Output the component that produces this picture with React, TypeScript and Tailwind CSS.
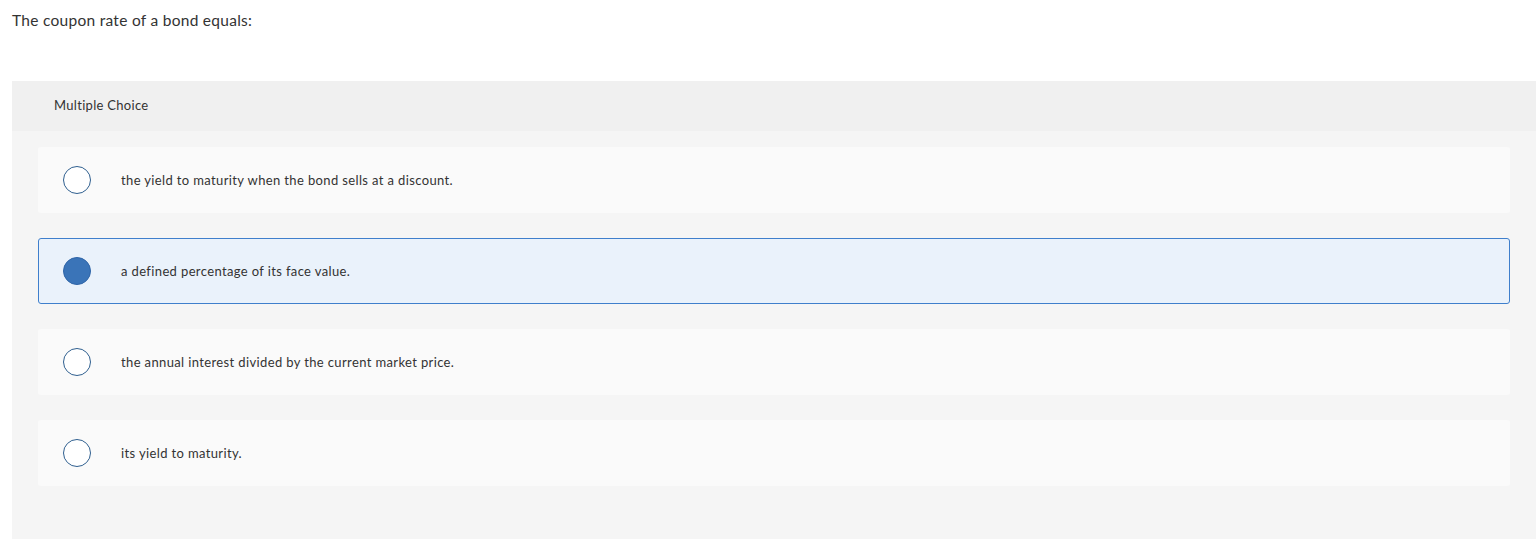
import { useState } from 'react';

const OPTIONS = [
  { id: 'a', label: 'the yield to maturity when the bond sells at a discount.' },
  { id: 'b', label: 'a defined percentage of its face value.' },
  { id: 'c', label: 'the annual interest divided by the current market price.' },
  { id: 'd', label: 'its yield to maturity.' },
];

export default function App() {
  const [selected, setSelected] = useState('b');

  return (
    <div className="min-h-[539px] bg-white pl-3 font-['Lato',sans-serif] text-[#333]">
      <p className="pt-[10px] text-[15.5px] leading-[20px] tracking-[0.28px]">The coupon rate of a bond equals:</p>

      <section className="mt-[51px] bg-[#f5f5f5] pb-[53px]">
        <div className="flex h-[50px] items-center bg-[#f0f0f0] pl-[42px] text-[13px] tracking-[0.3px] text-[#333]">
          Multiple Choice
        </div>

        <div className="flex flex-col gap-[25px] px-[26px] pt-4">
          {OPTIONS.map((opt) => {
            const isOn = opt.id === selected;
            return (
              <button
                key={opt.id}
                type="button"
                onClick={() => setSelected(opt.id)}
                className={
                  isOn
                    ? 'flex h-[66px] items-center rounded-[3px] border border-[#3f7fcc] bg-[#eaf2fb] text-left'
                    : 'flex h-[66px] items-center rounded-[3px] border border-transparent bg-[#fafafa] text-left'
                }
              >
                <span className="ml-[24px] flex h-[28px] w-[28px] shrink-0 items-center justify-center">
                  {isOn ? (
                    <span className="h-[28px] w-[28px] rounded-full border-[1.5px] border-[#2f65a8] bg-[#3a74b8]" />
                  ) : (
                    <span className="h-[28px] w-[28px] rounded-full border-[1.5px] border-[#2f5f8f] bg-white" />
                  )}
                </span>
                <span className="ml-[30px] pt-[2px] text-[13px] tracking-[0.37px] text-[#333]">{opt.label}</span>
              </button>
            );
          })}
        </div>
      </section>
    </div>
  );
}
